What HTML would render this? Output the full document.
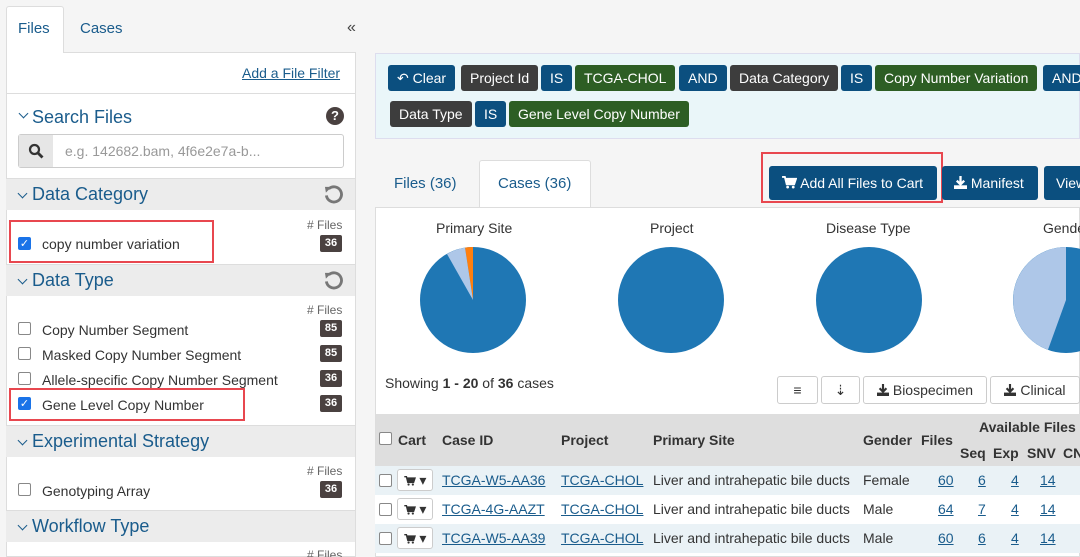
<!DOCTYPE html>
<html><head><style>
*{box-sizing:border-box;margin:0;padding:0}
html,body{width:1080px;height:557px;overflow:hidden}
body{background:#f5f5f5;font-family:"Liberation Sans",sans-serif;font-size:14px;color:#333;position:relative;white-space:nowrap}
.a{position:absolute}
.blue{color:#1a5c8c}
.hdr{position:absolute;left:6px;width:349px;height:32px;background:#ececec;border-top:1px solid #ddd}
.hdr span{position:absolute;left:26px;top:5px;font-size:18px;color:#1a5c8c}
.chev{position:absolute;left:13px;top:11px;width:7px;height:7px;border-right:1.5px solid #1a5c8c;border-bottom:1.5px solid #1a5c8c;transform:rotate(45deg)}
.reset{position:absolute;right:12px;top:6px}
.cb{position:absolute;width:13px;height:13px;border:1px solid #888;border-radius:2px;background:#fff}
.cbc{background:#1a73e8;border-color:#1a73e8;color:#fff;font-size:11px;line-height:12px;text-align:center}
.badge{position:absolute;left:320px;width:22px;height:17px;background:#4a4140;color:#fff;font-size:11px;font-weight:bold;text-align:center;line-height:17px;border-radius:2px}
.lbl{position:absolute;left:42px;font-size:14px;color:#333}
.chip{position:absolute;height:26px;line-height:26px;color:#fff;font-size:14px;padding:0 9px;border-radius:3px}
.db{background:#0b4f7f}.dg{background:#3d3d3d}.gr{background:#2d5e24}
.btn{position:absolute;height:34px;line-height:34px;background:#0b4f7f;color:#fff;font-size:14px;padding:0 12px;border-radius:3px}
.wb{position:absolute;height:28px;line-height:26px;border:1px solid #ccc;background:#fff;border-radius:3px;font-size:14px;text-align:center;color:#333}
.th{position:absolute;font-weight:bold;font-size:14px;color:#333}
.row{position:absolute;left:375px;width:705px;height:29px}
.row div{position:absolute;top:6px;font-size:14px}
.lk{color:#1a5c8c;text-decoration:underline}
.cart{position:absolute;left:22px;top:3px!important;width:36px;height:22px;border:1px solid #ccc;border-radius:3px;background:#fff;font-size:9px;text-align:center;line-height:20px}
</style></head><body>
<svg width="0" height="0" style="position:absolute"><defs>
<symbol id="rs" viewBox="0 0 20 20"><path d="M5 4 A8 8 0 1 1 2.5 11" fill="none" stroke="#777" stroke-width="3"/><path d="M1 2 L8 2 L2 8Z" fill="#777"/></symbol>
<symbol id="ct" viewBox="0 0 16 14"><path d="M0 1h3l2 8h8l2-6H4" fill="none" stroke="currentColor" stroke-width="2"/><circle cx="6" cy="12" r="1.5" fill="currentColor"/><circle cx="12" cy="12" r="1.5" fill="currentColor"/><path d="M4 3h11l-2 6H5z" fill="currentColor"/></symbol>
<symbol id="dl" viewBox="0 0 14 14"><path d="M7 0v8M3 5l4 4 4-4" fill="none" stroke="currentColor" stroke-width="2.5"/><path d="M0 10h14v4H0z" fill="currentColor"/></symbol>
</defs></svg>
<!-- left panel -->
<div class="a" style="left:6px;top:52px;width:350px;height:505px;background:#fff;border:1px solid #ddd"></div>
<div class="a" style="left:6px;top:6px;width:58px;height:47px;background:#fff;border:1px solid #ddd;border-bottom:none;border-radius:3px 3px 0 0"></div>
<div class="a blue" style="left:18px;top:20px;font-size:15px">Files</div>
<div class="a blue" style="left:80px;top:20px;font-size:15px">Cases</div>
<div class="a" style="left:347px;top:19px;font-size:16px;color:#444">«</div>
<div class="a lk" style="left:242px;top:65px;font-size:14px">Add a File Filter</div>
<div class="a" style="left:6px;top:93px;width:350px;height:1px;background:#ddd"></div>
<div class="chev" style="left:20px;top:110px"></div>
<div class="a blue" style="left:32px;top:107px;font-size:18px">Search Files</div>
<div class="a" style="left:326px;top:107px;width:18px;height:18px;border-radius:50%;background:#4a4140;color:#fff;font-size:13px;font-weight:bold;text-align:center;line-height:18px">?</div>
<div class="a" style="left:18px;top:134px;width:326px;height:34px;border:1px solid #ccc;border-radius:3px;background:#fff"></div>
<div class="a" style="left:19px;top:135px;width:34px;height:32px;background:#e6e6e6"></div>
<svg class="a" style="left:28px;top:143px" width="16" height="16" viewBox="0 0 16 16"><circle cx="6.5" cy="6.5" r="4.5" fill="none" stroke="#333" stroke-width="2.2"/><path d="M10 10l4.5 4.5" stroke="#333" stroke-width="2.8"/></svg>
<div class="a" style="left:65px;top:143px;color:#999;font-size:14px">e.g. 142682.bam, 4f6e2e7a-b...</div>

<div class="hdr" style="top:178px"><div class="chev"></div><span>Data Category</span><svg class="reset" width="19" height="19"><use href="#rs"/></svg></div>
<div class="a" style="left:307px;top:218px;font-size:12px;color:#666"># Files</div>
<div class="badge" style="top:235px">36</div>
<div class="cb cbc" style="left:18px;top:237px">✓</div>
<div class="lbl" style="top:236px">copy number variation</div>
<div class="a" style="left:9px;top:220px;width:205px;height:43px;border:2px solid #e8474f"></div>

<div class="hdr" style="top:264px"><div class="chev"></div><span>Data Type</span><svg class="reset" width="19" height="19"><use href="#rs"/></svg></div>
<div class="a" style="left:307px;top:303px;font-size:12px;color:#666"># Files</div>
<div class="badge" style="top:320px">85</div><div class="cb" style="left:18px;top:322px"></div><div class="lbl" style="top:322px">Copy Number Segment</div>
<div class="badge" style="top:345px">85</div><div class="cb" style="left:18px;top:347px"></div><div class="lbl" style="top:347px">Masked Copy Number Segment</div>
<div class="badge" style="top:370px">36</div><div class="cb" style="left:18px;top:372px"></div><div class="lbl" style="top:372px">Allele-specific Copy Number Segment</div>
<div class="badge" style="top:395px">36</div><div class="cb cbc" style="left:18px;top:397px">✓</div><div class="lbl" style="top:397px">Gene Level Copy Number</div>
<div class="a" style="left:9px;top:388px;width:236px;height:33px;border:2px solid #e8474f"></div>

<div class="hdr" style="top:425px"><div class="chev"></div><span>Experimental Strategy</span></div>
<div class="a" style="left:307px;top:464px;font-size:12px;color:#666"># Files</div>
<div class="badge" style="top:481px">36</div><div class="cb" style="left:18px;top:483px"></div><div class="lbl" style="top:483px">Genotyping Array</div>
<div class="hdr" style="top:510px"><div class="chev"></div><span>Workflow Type</span></div>
<div class="a" style="left:307px;top:548px;font-size:12px;color:#666"># Files</div>

<!-- filter bar -->
<div class="a" style="left:375px;top:53px;width:705px;height:86px;background:#eaf6f9;border:1px solid #dde"></div>
<div class="chip db" style="left:388px;top:65px">↶ Clear</div>
<div class="chip dg" style="left:461px;top:65px">Project Id</div>
<div class="chip db" style="left:541px;top:65px">IS</div>
<div class="chip gr" style="left:575px;top:65px">TCGA-CHOL</div>
<div class="chip db" style="left:679px;top:65px">AND</div>
<div class="chip dg" style="left:730px;top:65px">Data Category</div>
<div class="chip db" style="left:841px;top:65px">IS</div>
<div class="chip gr" style="left:875px;top:65px">Copy Number Variation</div>
<div class="chip db" style="left:1043px;top:65px">AND</div>
<div class="chip dg" style="left:390px;top:101px">Data Type</div>
<div class="chip db" style="left:475px;top:101px">IS</div>
<div class="chip gr" style="left:509px;top:101px">Gene Level Copy Number</div>

<!-- tabs -->
<div class="a blue" style="left:394px;top:175px;font-size:15px">Files (36)</div>
<div class="a" style="left:479px;top:160px;width:112px;height:48px;background:#fff;border:1px solid #ddd;border-bottom:none;border-radius:3px 3px 0 0"></div>
<div class="a blue" style="left:498px;top:175px;font-size:15px">Cases (36)</div>
<div class="btn" style="left:769px;top:166px;width:168px;padding:0 0 0 13px"><svg width="15" height="13" style="vertical-align:-1px"><use href="#ct"/></svg> Add All Files to Cart</div>
<div class="a" style="left:761px;top:152px;width:182px;height:51px;border:2px solid #e8474f"></div>
<div class="btn" style="left:942px;top:166px;width:96px"><svg width="13" height="13" style="vertical-align:-1px"><use href="#dl"/></svg> Manifest</div>
<div class="btn" style="left:1044px;top:166px;width:50px">View</div>

<!-- main panel -->
<div class="a" style="left:375px;top:207px;width:705px;height:350px;background:#fff;border:1px solid #ddd"></div>
<div class="a" style="left:436px;top:220px;font-size:14px">Primary Site</div>
<div class="a" style="left:650px;top:220px;font-size:14px">Project</div>
<div class="a" style="left:826px;top:220px;font-size:14px">Disease Type</div>
<div class="a" style="left:1043px;top:220px;font-size:14px">Gender</div>
<svg class="a" style="left:0;top:0" width="1080" height="557">
<circle cx="473" cy="300" r="53" fill="#1f77b4"/>
<path d="M473 300 L473 247 A53 53 0 0 0 465 247.6 Z" fill="#ff7f0e"/>
<path d="M473 300 L465 247.6 A53 53 0 0 0 447 254 Z" fill="#aec7e8"/>
<circle cx="671" cy="300" r="53" fill="#1f77b4"/>
<circle cx="869" cy="300" r="53" fill="#1f77b4"/>
<circle cx="1066" cy="300" r="53" fill="#1f77b4"/>
<path d="M1066 300 L1066 247 A53 53 0 0 0 1048 349.8 Z" fill="#aec7e8"/>
</svg>
<div class="a" style="left:385px;top:375px;font-size:14px">Showing <b>1 - 20</b> of <b>36</b> cases</div>
<div class="wb" style="left:777px;top:376px;width:41px">≡</div>
<div class="wb" style="left:821px;top:376px;width:39px">⇣</div>
<div class="wb" style="left:863px;top:376px;width:124px"><svg width="12" height="12" style="vertical-align:-1px"><use href="#dl"/></svg> Biospecimen</div>
<div class="wb" style="left:990px;top:376px;width:90px"><svg width="12" height="12" style="vertical-align:-1px"><use href="#dl"/></svg> Clinical</div>

<div class="a" style="left:376px;top:414px;width:704px;height:52px;background:#dedede"></div>
<div class="cb" style="left:379px;top:432px"></div>
<div class="th" style="left:398px;top:432px">Cart</div>
<div class="th" style="left:442px;top:432px">Case ID</div>
<div class="th" style="left:561px;top:432px">Project</div>
<div class="th" style="left:653px;top:432px">Primary Site</div>
<div class="th" style="left:863px;top:432px">Gender</div>
<div class="th" style="left:921px;top:432px">Files</div>
<div class="th" style="left:979px;top:419px">Available Files</div>
<div class="th" style="left:960px;top:445px">Seq</div>
<div class="th" style="left:993px;top:445px">Exp</div>
<div class="th" style="left:1027px;top:445px">SNV</div>
<div class="th" style="left:1063px;top:445px">CN</div>

<div class="row" style="top:466px;background:#eaf2f6"><div class="cb" style="left:4px;top:8px"></div><div class="cart"><svg width="12" height="10" style="vertical-align:-1px"><use href="#ct"/></svg> ▾</div><div class="lk" style="left:67px">TCGA-W5-AA36</div><div class="lk" style="left:186px">TCGA-CHOL</div><div style="left:278px">Liver and intrahepatic bile ducts</div><div style="left:488px">Female</div><div class="lk" style="left:563px">60</div><div class="lk" style="left:603px">6</div><div class="lk" style="left:636px">4</div><div class="lk" style="left:665px">14</div></div>
<div class="row" style="top:495px;background:#fff"><div class="cb" style="left:4px;top:8px"></div><div class="cart"><svg width="12" height="10" style="vertical-align:-1px"><use href="#ct"/></svg> ▾</div><div class="lk" style="left:67px">TCGA-4G-AAZT</div><div class="lk" style="left:186px">TCGA-CHOL</div><div style="left:278px">Liver and intrahepatic bile ducts</div><div style="left:488px">Male</div><div class="lk" style="left:563px">64</div><div class="lk" style="left:603px">7</div><div class="lk" style="left:636px">4</div><div class="lk" style="left:665px">14</div></div>
<div class="row" style="top:524px;background:#eaf2f6"><div class="cb" style="left:4px;top:8px"></div><div class="cart"><svg width="12" height="10" style="vertical-align:-1px"><use href="#ct"/></svg> ▾</div><div class="lk" style="left:67px">TCGA-W5-AA39</div><div class="lk" style="left:186px">TCGA-CHOL</div><div style="left:278px">Liver and intrahepatic bile ducts</div><div style="left:488px">Male</div><div class="lk" style="left:563px">60</div><div class="lk" style="left:603px">6</div><div class="lk" style="left:636px">4</div><div class="lk" style="left:665px">14</div></div>
</body></html>
